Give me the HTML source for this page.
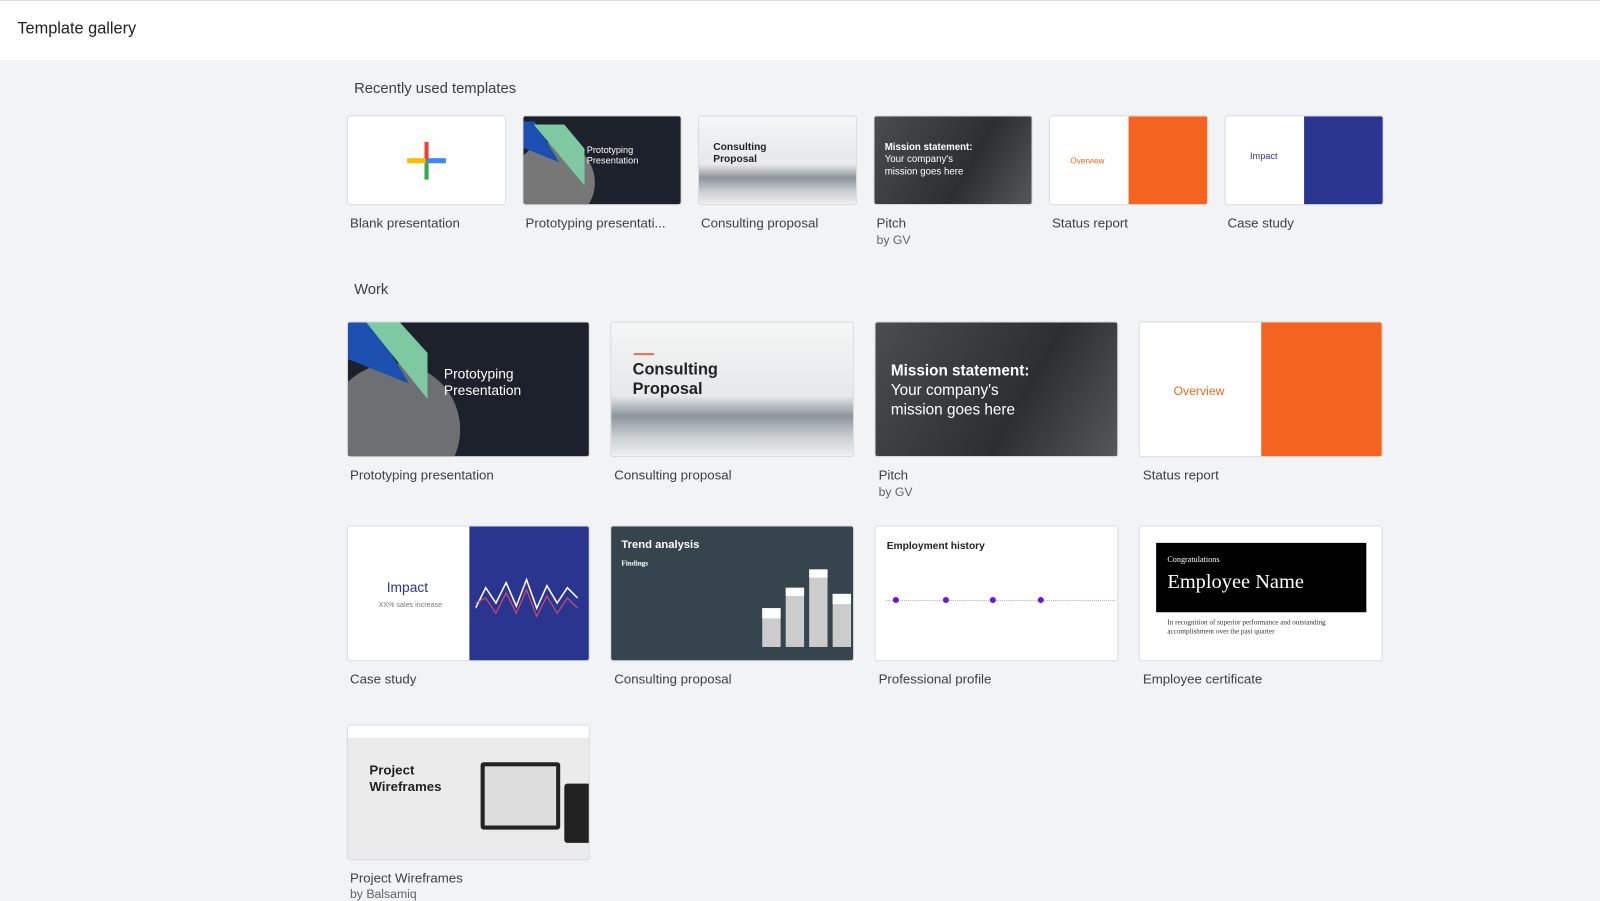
<!DOCTYPE html>
<html><head><meta charset="utf-8"><style>
*{box-sizing:border-box;margin:0;padding:0}
body{width:1600px;height:897px;overflow:hidden;background:#f1f3f4;font-family:"Liberation Sans",Arial,sans-serif;color:#3c4043;position:relative}
#w{position:absolute;left:0;top:0;width:1568px;height:879px;transform:scale(1.020408);transform-origin:0 0}
.hdr{position:absolute;left:0;top:0;width:1568px;height:59px;background:#fff;border-top:1px solid #dadce0}
.hdr span{position:absolute;left:17px;top:19px;font-size:16px;color:#202124}
.h{position:absolute;left:347px;font-size:14.5px;color:#3c4043}
.t{position:absolute;border:1px solid #dadce0;border-radius:3px;overflow:hidden;background:#fff}
.l{position:absolute;font-size:13px;color:#3c4043;white-space:nowrap}
.s{position:absolute;font-size:12px;color:#5f6368}
.dark{background:#1c212b}
.mnt{background:linear-gradient(180deg,#f4f5f5 0%,#e6e8e9 55%,#8d949a 70%,#c8cdd1 85%,#eef0f1 100%)}
.pitch{background:linear-gradient(120deg,#4a4c4e,#2c2e30 60%,#55585a)}
</style></head><body><div id="w">
<div class="hdr"><span>Template gallery</span></div>
<div class="h" style="top:79px">Recently used templates</div>

<div class="t" style="left:340px;top:113px;width:156px;height:88px">
 <div style="position:absolute;left:75px;top:25px;width:4px;height:19px;background:#ea4335"></div>
 <div style="position:absolute;left:75px;top:43px;width:4px;height:19px;background:#34a853"></div>
 <div style="position:absolute;left:58px;top:41px;width:18px;height:5px;background:#fbbc04"></div>
 <div style="position:absolute;left:78px;top:41px;width:18px;height:5px;background:#4285f4"></div>
</div>
<div class="t dark" style="left:512px;top:113px;width:156px;height:88px">
 <div style="position:absolute;left:-10px;top:25px;width:80px;height:80px;border-radius:50%;background:#777"></div>
 <div style="position:absolute;left:-5px;top:5px;width:40px;height:40px;background:#1d4fb0;clip-path:polygon(0 0,40% 0,100% 100%,0 60%)"></div>
 <div style="position:absolute;left:10px;top:8px;width:50px;height:60px;background:#7ec9a2;clip-path:polygon(0 0,60% 0,100% 40%,100% 100%)"></div>
 <div style="position:absolute;left:62px;top:28px;color:#fff;font-size:9px;line-height:10px">Prototyping<br>Presentation</div>
</div>
<div class="t mnt" style="left:684px;top:113px;width:156px;height:88px">
 <div style="position:absolute;left:14px;top:25px;color:#222;font-size:10px;font-weight:bold;line-height:12px">Consulting<br>Proposal</div>
</div>
<div class="t pitch" style="left:856px;top:113px;width:156px;height:88px">
 <div style="position:absolute;left:10px;top:25px;color:#fff;font-size:9.5px;line-height:12px"><b>Mission statement:</b><br>Your company's<br>mission goes here</div>
</div>
<div class="t" style="left:1028px;top:113px;width:156px;height:88px">
 <div style="position:absolute;left:77px;top:0;width:79px;height:88px;background:#f4631f"></div>
 <div style="position:absolute;left:20px;top:39px;color:#f4631f;font-size:8px">Overview</div>
</div>
<div class="t" style="left:1200px;top:113px;width:156px;height:88px">
 <div style="position:absolute;left:77px;top:0;width:79px;height:88px;background:#2a3590"></div>
 <div style="position:absolute;left:24px;top:34px;color:#2a3590;font-size:9px">Impact</div>
</div>
<div class="l" style="left:343px;top:211px">Blank presentation</div>
<div class="l" style="left:515px;top:211px">Prototyping presentati...</div>
<div class="l" style="left:687px;top:211px">Consulting proposal</div>
<div class="l" style="left:859px;top:211px">Pitch</div><div class="s" style="left:859px;top:228px">by GV</div>
<div class="l" style="left:1031px;top:211px">Status report</div>
<div class="l" style="left:1203px;top:211px">Case study</div>

<div class="h" style="top:276px">Work</div>

<div class="t dark" style="left:340px;top:315px;width:238px;height:133px">
 <div style="position:absolute;left:-20px;top:40px;width:130px;height:130px;border-radius:50%;background:#6d6f72"></div>
 <div style="position:absolute;left:0;top:0;width:60px;height:60px;background:#1d4fb0;clip-path:polygon(0 0,40% 0,100% 100%,0 60%)"></div>
 <div style="position:absolute;left:18px;top:0;width:60px;height:75px;background:#7ec9a2;clip-path:polygon(0 0,55% 0,100% 40%,100% 100%)"></div>
 <div style="position:absolute;left:94px;top:43px;color:#fff;font-size:13.5px;line-height:16px">Prototyping<br>Presentation</div>
</div>
<div class="t mnt" style="left:598px;top:315px;width:239px;height:133px">
 <div style="position:absolute;left:22px;top:30px;width:20px;height:2px;background:#e8705a"></div>
 <div style="position:absolute;left:21px;top:37px;color:#222;font-size:16px;font-weight:bold;line-height:19px">Consulting<br>Proposal</div>
</div>
<div class="t pitch" style="left:857px;top:315px;width:239px;height:133px">
 <div style="position:absolute;left:15px;top:38px;color:#fff;font-size:15px;line-height:19px"><b>Mission statement:</b><br>Your company's<br>mission goes here</div>
</div>
<div class="t" style="left:1116px;top:315px;width:239px;height:133px">
 <div style="position:absolute;left:119px;top:0;width:120px;height:133px;background:#f4631f"></div>
 <div style="position:absolute;left:33px;top:60px;color:#f4631f;font-size:12px">Overview</div>
</div>
<div class="l" style="left:343px;top:458px">Prototyping presentation</div>
<div class="l" style="left:602px;top:458px">Consulting proposal</div>
<div class="l" style="left:861px;top:458px">Pitch</div><div class="s" style="left:861px;top:475px">by GV</div>
<div class="l" style="left:1120px;top:458px">Status report</div>

<div class="t" style="left:340px;top:515px;width:238px;height:133px">
 <div style="position:absolute;left:119px;top:0;width:119px;height:133px;background:#2a3590"></div>
 <svg style="position:absolute;left:125px;top:40px" width="108" height="60"><polyline points="0,40 10,20 20,35 30,15 40,38 50,12 60,40 70,18 80,35 90,20 100,30" fill="none" stroke="#fff" stroke-width="1.5"/><polyline points="0,35 10,30 20,45 30,25 40,45 50,22 60,48 70,28 80,45 90,30 100,40" fill="none" stroke="#e94b6b" stroke-width="1"/></svg>
 <div style="position:absolute;left:38px;top:52px;color:#2a3590;font-size:13.5px">Impact</div>
 <div style="position:absolute;left:30px;top:74px;color:#777;font-size:7px">XX% sales increase</div>
</div>
<div class="t" style="left:598px;top:515px;width:239px;height:133px;background:#36454d">
 <div style="position:absolute;left:10px;top:12px;color:#fff;font-size:11px;font-weight:bold">Trend analysis</div>
 <div style="position:absolute;left:10px;top:32px;color:#fff;font-size:7px;font-weight:bold;font-family:'Liberation Serif',serif">Findings</div>
 <div style="position:absolute;left:148px;top:80px;width:18px;height:38px;background:#ccc;border-top:10px solid #fff"></div>
 <div style="position:absolute;left:171px;top:60px;width:18px;height:58px;background:#ccc;border-top:8px solid #fff"></div>
 <div style="position:absolute;left:194px;top:42px;width:18px;height:76px;background:#ccc;border-top:8px solid #fff"></div>
 <div style="position:absolute;left:217px;top:66px;width:18px;height:52px;background:#ccc;border-top:10px solid #fff"></div>
</div>
<div class="t" style="left:857px;top:515px;width:239px;height:133px">
 <div style="position:absolute;left:11px;top:14px;color:#222;font-size:10px;font-weight:bold">Employment history</div>
 <div style="position:absolute;left:10px;top:72px;width:225px;border-top:1px dotted #b9a6e6"></div>
 <div style="position:absolute;left:17px;top:69px;width:6px;height:6px;border-radius:50%;background:#6a1bd1"></div>
 <div style="position:absolute;left:66px;top:69px;width:6px;height:6px;border-radius:50%;background:#6a1bd1"></div>
 <div style="position:absolute;left:112px;top:69px;width:6px;height:6px;border-radius:50%;background:#6a1bd1"></div>
 <div style="position:absolute;left:159px;top:69px;width:6px;height:6px;border-radius:50%;background:#6a1bd1"></div>
</div>
<div class="t" style="left:1116px;top:515px;width:239px;height:133px">
 <div style="position:absolute;left:16px;top:16px;width:206px;height:68px;background:#000"></div>
 <div style="position:absolute;left:27px;top:28px;color:#fff;font-size:8px;font-family:'Liberation Serif',serif">Congratulations</div>
 <div style="position:absolute;left:27px;top:43px;color:#fff;font-size:20px;font-family:'Liberation Serif',serif">Employee Name</div>
 <div style="position:absolute;left:27px;top:90px;color:#333;font-size:7px;font-family:'Liberation Serif',serif;line-height:9px">In recognition of superior performance and outstanding<br>accomplishment over the past quarter</div>
</div>
<div class="l" style="left:343px;top:658px">Case study</div>
<div class="l" style="left:602px;top:658px">Consulting proposal</div>
<div class="l" style="left:861px;top:658px">Professional profile</div>
<div class="l" style="left:1120px;top:658px">Employee certificate</div>

<div class="t" style="left:340px;top:710px;width:238px;height:133px;background:#ebebeb">
 <div style="position:absolute;left:0;top:0;width:238px;height:12px;background:#fff"></div>
 <div style="position:absolute;left:21px;top:36px;color:#222;font-size:13px;font-weight:bold;line-height:16px">Project<br>Wireframes</div>
 <div style="position:absolute;left:130px;top:36px;width:78px;height:66px;background:#222;border-radius:3px"></div>
 <div style="position:absolute;left:134px;top:40px;width:70px;height:58px;background:#ddd"></div>
 <div style="position:absolute;left:212px;top:57px;width:26px;height:58px;background:#222;border-radius:3px"></div>
</div>
<div class="l" style="left:343px;top:853px">Project Wireframes</div>
<div class="s" style="left:343px;top:869px">by Balsamiq</div>
</div></body></html>
